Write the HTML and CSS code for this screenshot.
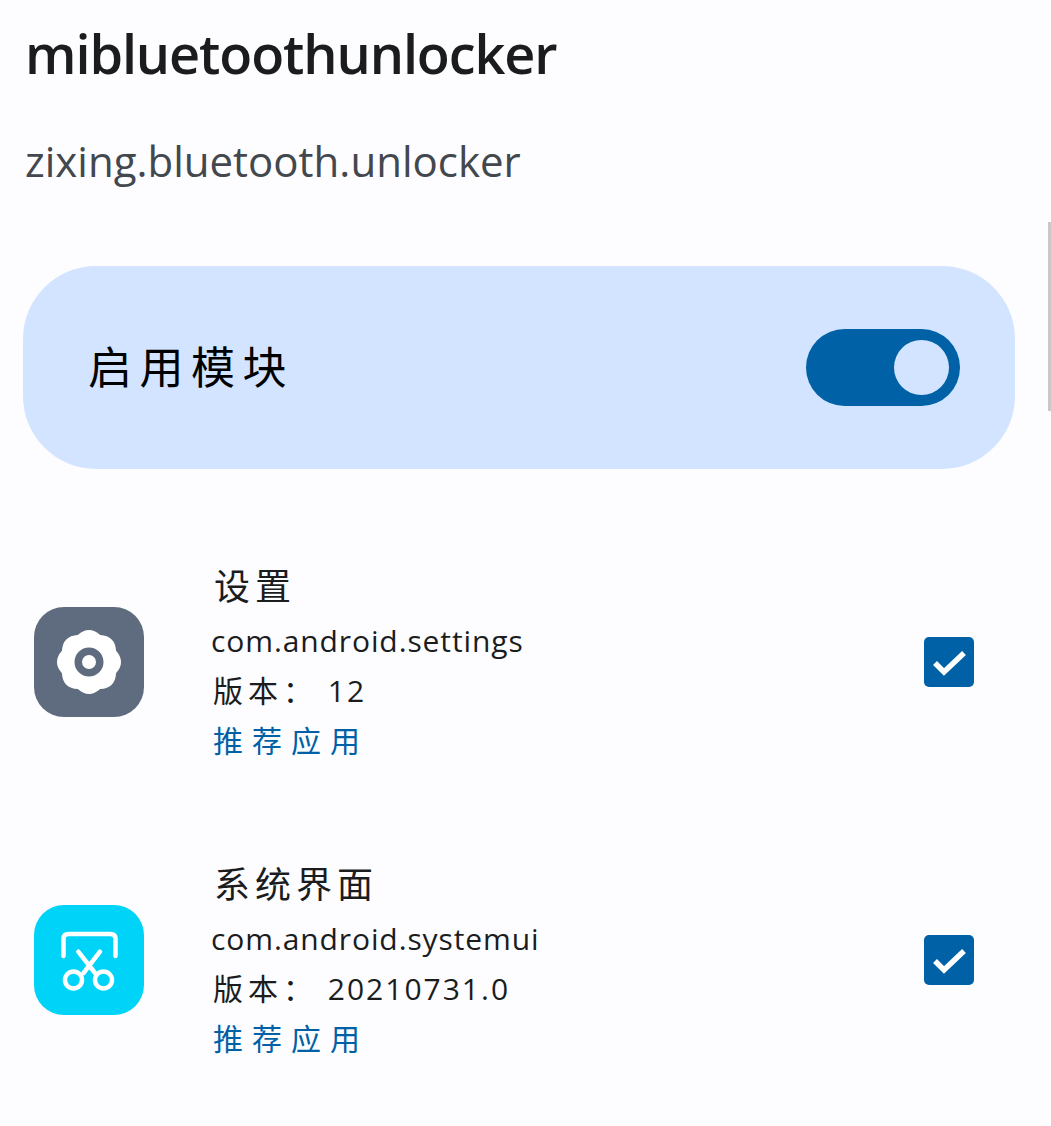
FILE: index.html
```html
<!DOCTYPE html>
<html lang="zh-CN">
<head>
    <meta charset="UTF-8">
    <meta name="viewport" content="width=device-width, initial-scale=1.0">
    <title>mibluetoothunlocker</title>
    <link rel="stylesheet" href="styles.css">
</head>
<body>

    <div class="scrollbar"></div>

    <div class="header">
        <h1 class="app-name">mibluetoothunlocker</h1>
        <p class="package-name">zixing.bluetooth.unlocker</p>
    </div>

    <div class="master-card">
        <span class="master-label">启用模块</span>
        <div class="switch"><div class="switch-thumb"></div></div>
    </div>

    <div class="app-list">
        <div class="app-row">
            <div class="app-icon icon-settings">
                <svg width="70" height="70" viewBox="0 0 70 70">
                    <path fill="#fff" d="M62.070 46.200Q61.200 61.200 46.200 62.070Q35 72 23.800 62.070Q8.800 61.200 7.930 46.200Q-2 35 7.930 23.800Q8.800 8.800 23.800 7.930Q35-2 46.200 7.930Q61.200 8.800 62.070 23.800Q72 35 62.070 46.200z"/>
                    <circle cx="35" cy="35" r="10.750" fill="none" stroke="#5f6c7f" stroke-width="7.500"/>
                </svg>
            </div>
            <div class="app-info">
                <div class="app-title">设置</div>
                <div class="app-package">com.android.settings</div>
                <div class="app-version"><span class="version-label">版本：</span> 12</div>
                <div class="app-tag">推荐应用</div>
            </div>
            <div class="checkbox">
                <svg width="50" height="50" viewBox="0 0 50 50">
                    <path fill="none" stroke="#fff" stroke-width="5.500" d="M11 26l9 9l20-19"/>
                </svg>
            </div>
        </div>

        <div class="app-row">
            <div class="app-icon icon-systemui">
                <svg width="70" height="70" viewBox="0 0 70 70" fill="none" stroke="#fff" stroke-width="4.500" stroke-linecap="round">
                    <path d="M9.500 31V14q0-5 5-5h42q5 0 5 5v17"/>
                    <path d="M24.300 26.700L41 48M46 26.700L29.500 48"/>
                    <circle cx="19.500" cy="55" r="8.500"/>
                    <circle cx="49.500" cy="55" r="8.500"/>
                </svg>
            </div>
            <div class="app-info">
                <div class="app-title">系统界面</div>
                <div class="app-package">com.android.systemui</div>
                <div class="app-version"><span class="version-label">版本：</span> 20210731.0</div>
                <div class="app-tag">推荐应用</div>
            </div>
            <div class="checkbox">
                <svg width="50" height="50" viewBox="0 0 50 50">
                    <path fill="none" stroke="#fff" stroke-width="5.500" d="M11 26l9 9l20-19"/>
                </svg>
            </div>
        </div>
    </div>

</body>
</html>
```

FILE: styles.css
```css
/* Page */
body {
    font-family: "Open Sans", "Noto Sans CJK SC", sans-serif;
    margin: 0;
    height: 1126px;
    overflow: hidden;
    background-color: #fdfdff;
    color: #1a1c1e;
}

.scrollbar {
    position: absolute;
    top: 222px;
    right: 0;
    width: 3px;
    height: 189px;
    background-color: #c8c8cb;
}

/* Header */
.header {
    padding: 18px 0 0 25px;
}

.app-name {
    margin: 0;
    font-size: 54px;
    line-height: 70px;
    font-weight: 600;
    letter-spacing: -1.1px;
}

.package-name {
    margin: 53px 0 0;
    font-size: 42px;
    line-height: 40px;
    color: #43474e;
}

/* Enable card */
.master-card {
    display: flex;
    justify-content: space-between;
    align-items: center;
    box-sizing: border-box;
    width: 992px;
    height: 203px;
    margin: 85px 0 0 23px;
    padding: 0 55px 0 65px;
    border-radius: 73px;
    background-color: #d2e4ff;
}

.master-label {
    padding-bottom: 6px;
    font-size: 44px;
    letter-spacing: 7.5px;
    color: #000;
}

.switch {
    display: flex;
    justify-content: flex-end;
    align-items: center;
    box-sizing: border-box;
    width: 154px;
    height: 77px;
    padding-right: 11px;
    border-radius: 39px;
    background-color: #0061a6;
}

.switch-thumb {
    width: 55px;
    height: 55px;
    border-radius: 50%;
    background-color: #d2e4ff;
}

/* App list */
.app-list {
    margin-top: 44px;
}

.app-row {
    display: flex;
    align-items: center;
    height: 298px;
    padding-left: 34px;
}

.app-icon {
    display: flex;
    justify-content: center;
    align-items: center;
    width: 110px;
    height: 110px;
    border-radius: 30px;
}

.icon-settings {
    background-color: #5f6c7f;
}

.icon-systemui {
    background-color: #00d3f8;
}

.app-info {
    flex: 1;
    margin: 4px 0 0 67px;
}

.app-title {
    margin-bottom: 4px;
    padding-left: 3px;
    font-size: 36px;
    line-height: 50px;
    letter-spacing: 5px;
}

.app-package {
    font-size: 30px;
    line-height: 50px;
    letter-spacing: 0.9px;
}

.app-version {
    padding-left: 2px;
    font-size: 30px;
    line-height: 50px;
    letter-spacing: 2px;
}

.version-label {
    letter-spacing: 5px;
}

.app-tag {
    padding-left: 2px;
    font-size: 30px;
    line-height: 50px;
    letter-spacing: 9px;
    color: #0061a6;
}

.checkbox {
    width: 50px;
    height: 50px;
    margin-right: 77px;
    border-radius: 5px;
    background-color: #0061a6;
}
```
